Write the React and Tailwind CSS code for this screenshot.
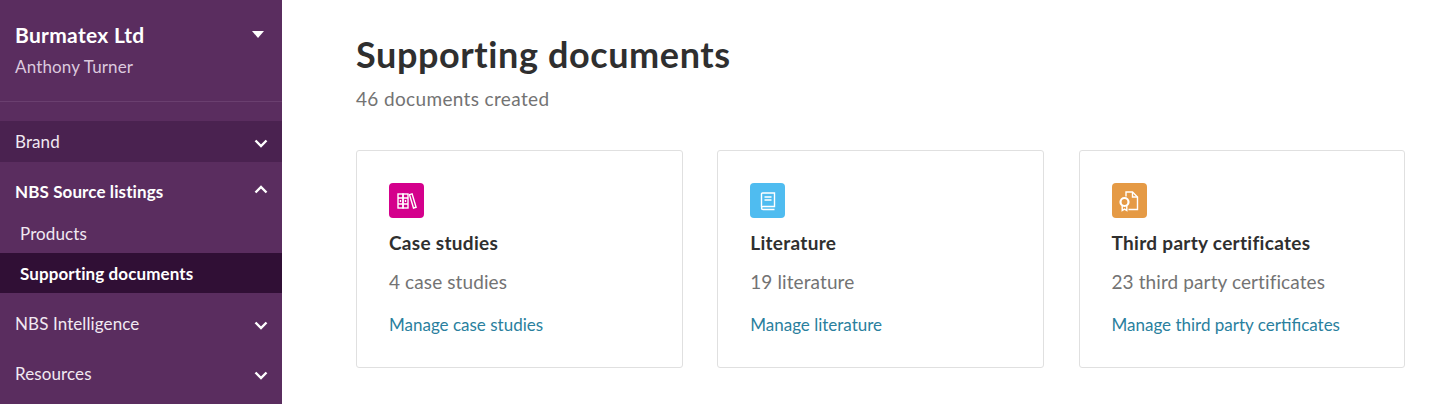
const BooksIcon = () => (
  <svg width="22" height="18" viewBox="0 0 22 18" fill="none" stroke="white" strokeWidth="1.4">
    <rect x="2" y="2" width="5" height="14" />
    <rect x="7" y="2" width="5" height="14" />
    <path d="M2 6h10M2 12h10M4.5 8v2M9.5 8v2" />
    <path d="M13.5 2.6l2.6-.8 4 13.4-2.6.8z" />
  </svg>
);

const BookIcon = () => (
  <svg width="18" height="20" viewBox="0 0 18 20" fill="none" stroke="white" strokeWidth="1.4">
    <path d="M2.5 16V3a1 1 0 0 1 1-1h12v13.5H4a1.5 1.5 0 0 0-1.5 1.5A1.5 1.5 0 0 0 4 18.5h11.5" />
    <path d="M5.5 6h7M5.5 9h7" />
  </svg>
);

const CertificateIcon = () => (
  <svg width="22" height="22" viewBox="0 0 22 22" fill="none" stroke="white" strokeWidth="1.4">
    <path d="M8 6.5V2h6.5l5 5v12.5H10.5" />
    <path d="M14.5 2v5h5" />
    <circle cx="6.5" cy="12" r="4" strokeWidth="2.2" />
    <path d="M4.2 15.5V20.5l2.3-1.4 2.3 1.4v-5" />
  </svg>
);

const Chevron = ({ up }) => (
  <svg width="14" height="9" viewBox="0 0 14 9" fill="none" stroke="white" strokeWidth="2.4" className={up ? 'rotate-180' : ''}>
    <path d="M1.5 1.5L7 7l5.5-5.5" />
  </svg>
);

const NavItem = ({ label, open, strong, dark }) => (
  <div className={`flex h-[41px] items-center justify-between pl-[15px] pr-[14px] text-[17px] tracking-[0.1px] ${dark ? 'bg-[#4a2250]' : ''} ${strong ? 'font-bold text-white' : 'text-[#f1e9f2]'}`}>
    <span>{label}</span>
    <span className={open ? '-translate-y-[2px]' : 'translate-y-[2px]'}>
      <Chevron up={open} />
    </span>
  </div>
);

const DocCard = ({ icon, color, title, count, link }) => (
  <div className="h-[218px] flex-1 rounded-[3px] border border-[#e0e0e0] bg-white pl-[32px] pt-[32px]">
    <div className={`flex h-[35px] w-[35px] items-center justify-center rounded-[4px] ${color}`}>{icon}</div>
    <h3 className="mt-[13px] text-[19px] font-bold leading-[24px] tracking-[0.3px] text-[#2f2f2f]">{title}</h3>
    <p className="mt-[15px] text-[19px] leading-[24px] tracking-[0.1px] text-[#737373]">{count}</p>
    <a className="mt-[19px] block text-[17px] leading-[24px] text-[#2a7f9e]">{link}</a>
  </div>
);

export default function App() {
  return (
    <div className="flex h-[404px] overflow-hidden bg-white font-['Lato',sans-serif]">
      <aside className="w-[282px] shrink-0 bg-[#5a2d5f]">
        <div className="relative h-[102px] border-b border-[#6a3f6f] pl-[15px] pt-[21px]">
          <div className="text-[21px] font-bold leading-[28px] tracking-[0.3px] text-white">Burmatex Ltd</div>
          <div className="mt-[6px] text-[17px] leading-[24px] tracking-[0.15px] text-[#dcc9de]">Anthony Turner</div>
          <div className="absolute right-[18px] top-[31px] h-0 w-0 border-x-[6px] border-t-[7px] border-x-transparent border-t-white" />
        </div>
        <div className="pt-[19px]">
          <NavItem label="Brand" dark />
          <div className="h-[9px]" />
          <NavItem label="NBS Source listings" open strong />
          <div className="flex h-[41px] items-center pl-[20px] pt-[2px] text-[17px] tracking-[0.1px] text-[#f1e9f2]">Products</div>
          <div className="flex h-[40px] items-center bg-[#300f35] pl-[20px] pt-[2px] text-[17px] font-bold tracking-[0.1px] text-white">Supporting documents</div>
          <div className="h-[10px]" />
          <NavItem label="NBS Intelligence" />
          <div className="h-[9px]" />
          <NavItem label="Resources" />
        </div>
      </aside>
      <main className="flex-1 pl-[74px] pr-[35px] pt-[32px]">
        <h1 className="text-[36px] font-bold leading-[44px] tracking-[0.6px] text-[#2f2f2f]">Supporting documents</h1>
        <p className="mt-[11px] text-[19px] leading-[24px] tracking-[0.35px] text-[#737373]">46 documents created</p>
        <div className="mt-[39px] flex gap-[34.75px]">
          <DocCard icon={<BooksIcon />} color="bg-[#d4008c]" title="Case studies" count="4 case studies" link="Manage case studies" />
          <DocCard icon={<BookIcon />} color="bg-[#4fbcf0]" title="Literature" count="19 literature" link="Manage literature" />
          <DocCard icon={<CertificateIcon />} color="bg-[#e59a45]" title="Third party certificates" count="23 third party certificates" link="Manage third party certificates" />
        </div>
      </main>
    </div>
  );
}
